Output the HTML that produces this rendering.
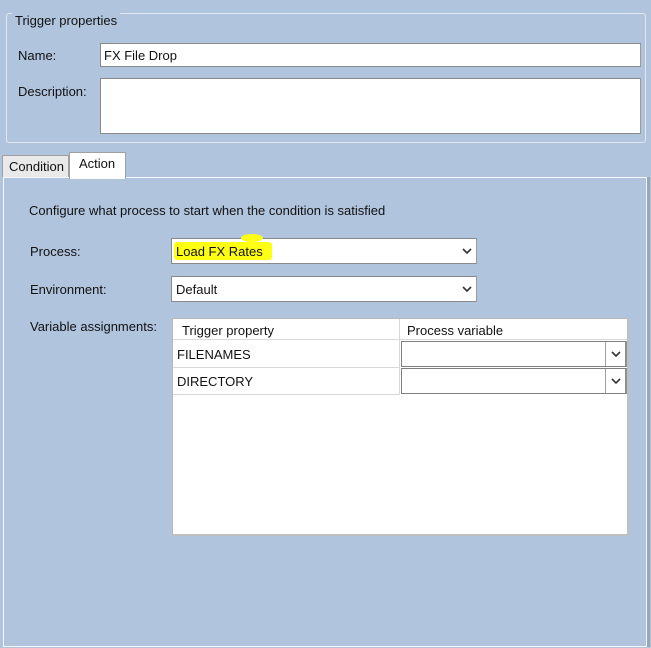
<!DOCTYPE html>
<html><head><style>
body{margin:0;width:651px;height:648px;background:#b0c4de;position:relative;overflow:hidden;font-family:"Liberation Sans",sans-serif;font-size:13px;color:#111;}
.a{position:absolute;}
.tb{position:absolute;background:#fff;border:1px solid #8a8a8a;border-right-color:#9a9a9a;box-sizing:border-box;}
.arrow{position:absolute;width:12px;height:10px;}
</style></head><body>
<div class="a" style="left:6px;top:13px;width:640px;height:130px;border:1px solid #e2e8f0;border-radius:3px;box-sizing:border-box"></div>
<div class="a" style="left:12px;top:13px;background:#b0c4de;padding:0 3px;line-height:16px">Trigger properties</div>
<div class="a" style="left:18px;top:48px">Name:</div>
<div class="tb" style="left:100px;top:43px;width:541px;height:24px;padding:4px 3px">FX File Drop</div>
<div class="a" style="left:18px;top:84px">Description:</div>
<div class="tb" style="left:100px;top:78px;width:541px;height:56px"></div>

<div class="a" style="left:3px;top:177px;width:644px;height:470px;border:1px solid #f4f7fb;box-sizing:border-box;box-shadow:3px 0 0 #9aa5b5"></div>
<div class="a" style="left:2px;top:155px;width:67px;height:22px;background:#e9e9e9;border:1px solid #a0a0a0;border-bottom:none;box-sizing:border-box;padding:3px 0 0 6px">Condition</div>
<div class="a" style="left:69px;top:152px;width:57px;height:27px;background:#fff;border:1px solid #a0a0a0;border-bottom:none;box-sizing:border-box;padding:3px 0 0 9px">Action</div>

<div class="a" style="left:29px;top:203px">Configure what process to start when the condition is satisfied</div>
<div class="a" style="left:30px;top:244px">Process:</div>
<div class="tb" style="left:171px;top:238px;width:306px;height:26px"></div>
<div class="a" style="left:174px;top:242px;width:98px;height:18px;background:#ffff14;border-radius:3px"></div>
<div class="a" style="left:241px;top:234px;width:22px;height:8px;background:#ffff14;border-radius:50%"></div>
<div class="a" style="left:176px;top:244px">Load FX Rates</div>
<svg class="arrow" style="left:461px;top:246px" viewBox="0 0 12 10"><path d="M2 3L6 7L10 3" stroke="#333" stroke-width="1.6" fill="none"/></svg>
<div class="a" style="left:30px;top:282px">Environment:</div>
<div class="tb" style="left:171px;top:276px;width:306px;height:26px;padding:5px 4px">Default</div>
<svg class="arrow" style="left:461px;top:284px" viewBox="0 0 12 10"><path d="M2 3L6 7L10 3" stroke="#333" stroke-width="1.6" fill="none"/></svg>

<div class="a" style="left:30px;top:319px">Variable assignments:</div>
<div class="a" style="left:172px;top:318px;width:457px;height:218px;background:#fff;border:1px solid #b8b8b8;box-sizing:border-box;border-right:2px solid #c0c0c0;border-bottom:2px solid #c0c0c0"></div>
<div class="a" style="left:173px;top:319px;width:454px;height:21px;border-bottom:1px solid #d8d8d8;box-sizing:border-box"></div>
<div class="a" style="left:399px;top:319px;width:1px;height:75px;background:#d8d8d8"></div>
<div class="a" style="left:182px;top:323px">Trigger property</div>
<div class="a" style="left:407px;top:323px">Process variable</div>
<div class="a" style="left:173px;top:367px;width:227px;height:1px;background:#d8d8d8"></div>
<div class="a" style="left:173px;top:394px;width:227px;height:1px;background:#d8d8d8"></div>
<div class="a" style="left:177px;top:347px">FILENAMES</div>
<div class="a" style="left:177px;top:374px">DIRECTORY</div>
<div class="a" style="left:401px;top:341px;width:226px;height:26px;border:1px solid #808080;border-right:2px solid #909090;box-sizing:border-box"></div>
<div class="a" style="left:605px;top:342px;width:1px;height:24px;background:#a0a0a0"></div>
<svg class="arrow" style="left:610px;top:349px" viewBox="0 0 12 10"><path d="M2 3L6 7L10 3" stroke="#333" stroke-width="1.6" fill="none"/></svg>
<div class="a" style="left:401px;top:368px;width:226px;height:26px;border:1px solid #808080;border-right:2px solid #909090;box-sizing:border-box"></div>
<div class="a" style="left:605px;top:369px;width:1px;height:24px;background:#a0a0a0"></div>
<svg class="arrow" style="left:610px;top:376px" viewBox="0 0 12 10"><path d="M2 3L6 7L10 3" stroke="#333" stroke-width="1.6" fill="none"/></svg>
</body></html>
